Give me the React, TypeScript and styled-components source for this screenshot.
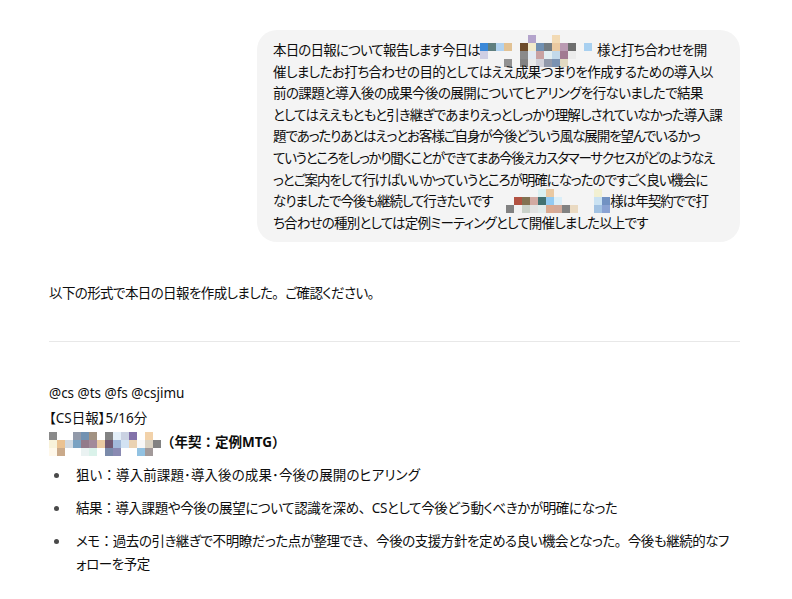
import React from "react";
import styled, { createGlobalStyle } from "styled-components";

const GlobalStyle = createGlobalStyle`
  html, body {
    margin: 0;
    padding: 0;
    background: #ffffff;
  }
  body {
    font-family: "Noto Sans", "Noto Sans CJK JP", sans-serif;
    font-size: 13.5px;
    color: #0d0d0d;
    font-feature-settings: "palt";
  }
`;

const Page = styled.main`
  width: 691px;
  padding: 30px 52px 0 49px;
`;

const UserRow = styled.div`
  display: flex;
  justify-content: flex-end;
`;

const Bubble = styled.div`
  box-sizing: border-box;
  width: 483px;
  padding: 10px 16px 8px 16px;
  background: #f4f4f4;
  border-radius: 20px;
  line-height: 21.6px;
`;

const Line = styled.span<{ $track: number }>`
  display: block;
  white-space: nowrap;
  letter-spacing: ${(p) => p.$track}px;
`;

const Reply = styled.section`
  margin-top: 39px;
`;

const Paragraph = styled.p`
  margin: 0;
  line-height: 24px;
  letter-spacing: -0.6px;
`;

const Divider = styled.hr`
  margin: 36px 0 39px 0;
  border: none;
  border-top: 1px solid #e8e8e8;
  height: 0;
`;

const Header = styled.div`
  line-height: 24.5px;
`;

const HeaderLine = styled.div`
  white-space: nowrap;
`;

const Strong = styled.strong`
  font-weight: 700;
`;

const Full = styled.span`
  font-feature-settings: normal;
`;

const List = styled.ul`
  list-style: none;
  margin: 8px 0 0 0;
  padding: 0;
  line-height: 23px;
`;

const Item = styled.li`
  display: flex;
  align-items: flex-start;
  & + & {
    margin-top: 10px;
  }
  &::before {
    content: "";
    flex: none;
    width: 5px;
    height: 5px;
    border-radius: 50%;
    background: #4a4a4a;
    margin: 9px 17px 0 5px;
  }
`;

const ItemText = styled.span<{ $track: number }>`
  white-space: nowrap;
  letter-spacing: ${(p) => p.$track}px;
`;

const MosaicSvg = styled.svg<{ $gap: number; $after: number; $trim: number; $lift: number }>`
  display: inline-block;
  vertical-align: middle;
  margin-left: ${(p) => p.$gap}px;
  margin-right: ${(p) => p.$after}px;
  margin-top: ${(p) => -p.$trim - p.$lift}px;
  margin-bottom: ${(p) => -p.$trim + p.$lift}px;
`;

type Grid = string[][];

const CELL = 8;

function Mosaic({
  grid,
  gap = 0,
  after = 0,
  trim = 0,
  lift = 0,
}: {
  grid: Grid;
  gap?: number;
  after?: number;
  trim?: number;
  lift?: number;
}) {
  const rows = grid.length;
  const cols = grid[0].length;
  return (
    <MosaicSvg
      $gap={gap}
      $after={after}
      $trim={trim}
      $lift={lift}
      width={cols * CELL}
      height={rows * CELL}
      viewBox={`0 0 ${cols * CELL} ${rows * CELL}`}
      aria-hidden="true"
    >
      {grid.map((row, r) =>
        row.map((c, i) =>
          c ? (
            <rect
              key={`${r}-${i}`}
              x={i * CELL}
              y={r * CELL}
              width={CELL}
              height={CELL}
              fill={c}
            />
          ) : null
        )
      )}
    </MosaicSvg>
  );
}

const _ = "";

const mosaicA: Grid = [
  [_, _, _, _, _, _, "#b4a4cc", _, _, "#f2dab4", _, _, _, _],
  ["#3a88d8", "#5f7f7f", "#b0d2f0", "#e2c294", _, "#6e4c2c", "#f2eacb", "#7090b2", "#737c82", "#eac9a0", "#ba9ab2", "#6e6e6e", _, "#a8d0f0"],
  ["#cfcfe4", _, _, _, _, "#8a8a8a", "#e2eaf2", "#c9a2a2", "#e2eef2", "#c2d9ea", "#a27a92", "#ececec", _, _],
  [_, _, _, "#929292", _, "#828282", "#eaeaea", "#d2d2da", "#9299aa", "#7a92b2", "#e2dac2", _, _, _],
];

const mosaicB: Grid = [
  [_, _, _, _, "#daf0f2", "#eac9a2", _, _, _, _, _, "#f2f0d2", _],
  [_, "#b25242", "#827252", "#d2aaa2", "#427272", "#92caf2", "#daeef8", _, _, _, _, "#cae2f2", "#7292c2"],
  ["#828282", "#f2f2f2", "#cad2ca", "#e2e2e2", "#e2eaea", "#daaa92", "#d2aa9a", "#828282", "#eadac2", _, _, "#a2c2e2", "#8aa2d2"],
];

const mosaicC: Grid = [
  ["#8a8a8a", _, _, "#929aaa", "#7292b2", "#a29282", _, "#828282", "#e2eef8", "#cad2e2", "#8272aa", _, "#f2d2aa", _],
  ["#f8f2da", "#eac292", "#d2dae2", "#7aa2c2", "#927a8a", "#a28a9a", "#eacaa2", "#725a72", "#a2bada", "#d2e2f2", "#ead2b2", "#f8f8f8", "#dad2c2", "#828282"],
  ["#fff8ea", "#caaa8a", _, _, "#eaf2f2", "#daf2ea", _, "#7a8aaa", "#8a8ab2", _, _, "#92c2e2", "#a29a9a", _],
];

export default function App() {
  return (
    <>
      <GlobalStyle />
      <Page>
        <UserRow>
          <Bubble>
            <Line $track={-0.83}>
              本日の日報について報告します今日は
              <Mosaic grid={mosaicA} trim={6} after={5} />
              様と打ち合わせを開
            </Line>
            <Line $track={-0.56}>催しましたお打ち合わせの目的としてはええ成果つまりを作成するための導入以</Line>
            <Line $track={-0.62}>前の課題と導入後の成果今後の展開についてヒアリングを行ないましたで結果</Line>
            <Line $track={-0.86}>としてはええもともと引き継ぎであまりえっとしっかり理解しされていなかった導入課</Line>
            <Line $track={-1.09}>題であったりあとはえっとお客様ご自身が今後どういう風な展開を望んでいるかっ</Line>
            <Line $track={-1.22}>ていうところをしっかり聞くことができてまあ今後えカスタマーサクセスがどのようなえ</Line>
            <Line $track={-1.03}>っとご案内をして行けばいいかっていうところが明確になったのですごく良い機会に</Line>
            <Line $track={-1.04}>
              なりましたで今後も継続して行きたいです
              <Mosaic grid={mosaicB} gap={14} trim={2} lift={2} />
              様は年契約でで打
            </Line>
            <Line $track={-0.8}>ち合わせの種別としては定例ミーティングとして開催しました以上です</Line>
          </Bubble>
        </UserRow>

        <Reply>
          <Paragraph>
            以下の形式で本日の日報を作成しました<Full>。</Full>ご確認ください<Full>。</Full>
          </Paragraph>
          <Divider />
          <Header>
            <HeaderLine>@cs @ts @fs @csjimu</HeaderLine>
            <HeaderLine>【CS日報】5/16分</HeaderLine>
            <HeaderLine>
              <Mosaic grid={mosaicC} />
              <Strong>
                <Full>（</Full>年契<Full>：</Full>定例MTG<Full>）</Full>
              </Strong>
            </HeaderLine>
          </Header>
          <List>
            <Item>
              <ItemText $track={0.1}>
                狙い<Full>：</Full>導入前課題･導入後の成果･今後の展開のヒアリング
              </ItemText>
            </Item>
            <Item>
              <ItemText $track={-0.38}>
                結果<Full>：</Full>導入課題や今後の展望について認識を深め<Full>、</Full>CSとして今後どう動くべきかが明確になった
              </ItemText>
            </Item>
            <Item>
              <ItemText $track={-0.45}>
                メモ<Full>：</Full>過去の引き継ぎで不明瞭だった点が整理でき<Full>、</Full>今後の支援方針を定める良い機会となった<Full>。</Full>今後も継続的なフ
                <br />
                ォローを予定
              </ItemText>
            </Item>
          </List>
        </Reply>
      </Page>
    </>
  );
}
